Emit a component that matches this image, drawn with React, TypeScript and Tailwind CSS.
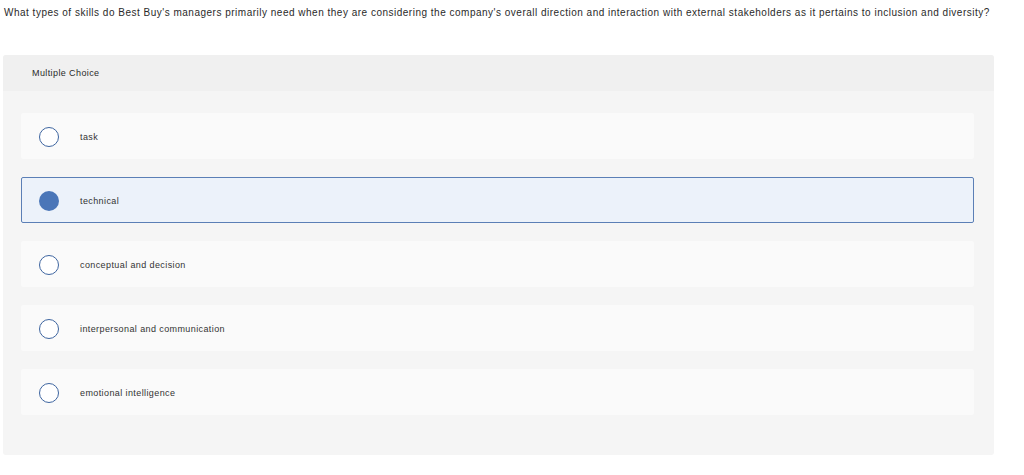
import React, { useState } from "react";

const options = [
  "task",
  "technical",
  "conceptual and decision",
  "interpersonal and communication",
  "emotional intelligence",
];

export default function App() {
  const [selected, setSelected] = useState(1);

  return (
    <div className="w-[1024px] h-[475px] bg-white text-[#2a2a2a] font-['Liberation_Sans',Arial,sans-serif] overflow-hidden">
      {/* Question */}
      <p className="pl-[4px] pt-[6px] text-[10px] leading-[13px] tracking-[0.5px]">
        What types of skills do Best Buy's managers primarily need when they are considering the company's overall direction and interaction with external stakeholders as it pertains to inclusion and diversity?
      </p>

      {/* Answer panel */}
      <div className="ml-[3px] mt-[36px] w-[991px] h-[400px] bg-[#f5f5f5] rounded-[3px] flex flex-col">
        <div className="h-[36px] bg-[#f0f0f0] rounded-t-[3px] flex items-center pl-[29px] pt-[1px] text-[9px] tracking-[0.4px]">
          Multiple Choice
        </div>

        <div className="flex flex-col gap-[18px] pl-[18px] pr-[20px] pt-[22px]">
          {options.map((label, i) => {
            const active = i === selected;
            return (
              <button
                key={label}
                onClick={() => setSelected(i)}
                className={`h-[46px] flex items-center rounded-[2px] text-left ${
                  active
                    ? "bg-[#ecf2fa] border border-[#5b7fb6]"
                    : "bg-[#fafafa] border border-transparent"
                }`}
              >
                <span
                  className={`ml-[17px] mt-[1px] w-[20px] h-[20px] rounded-full shrink-0 ${
                    active
                      ? "bg-[#4a76b8]"
                      : "bg-white border border-[#3e65a0]"
                  }`}
                />
                <span className="ml-[21px] mt-[3px] text-[9px] tracking-[0.4px] text-[#333]">{label}</span>
              </button>
            );
          })}
        </div>
      </div>
    </div>
  );
}
